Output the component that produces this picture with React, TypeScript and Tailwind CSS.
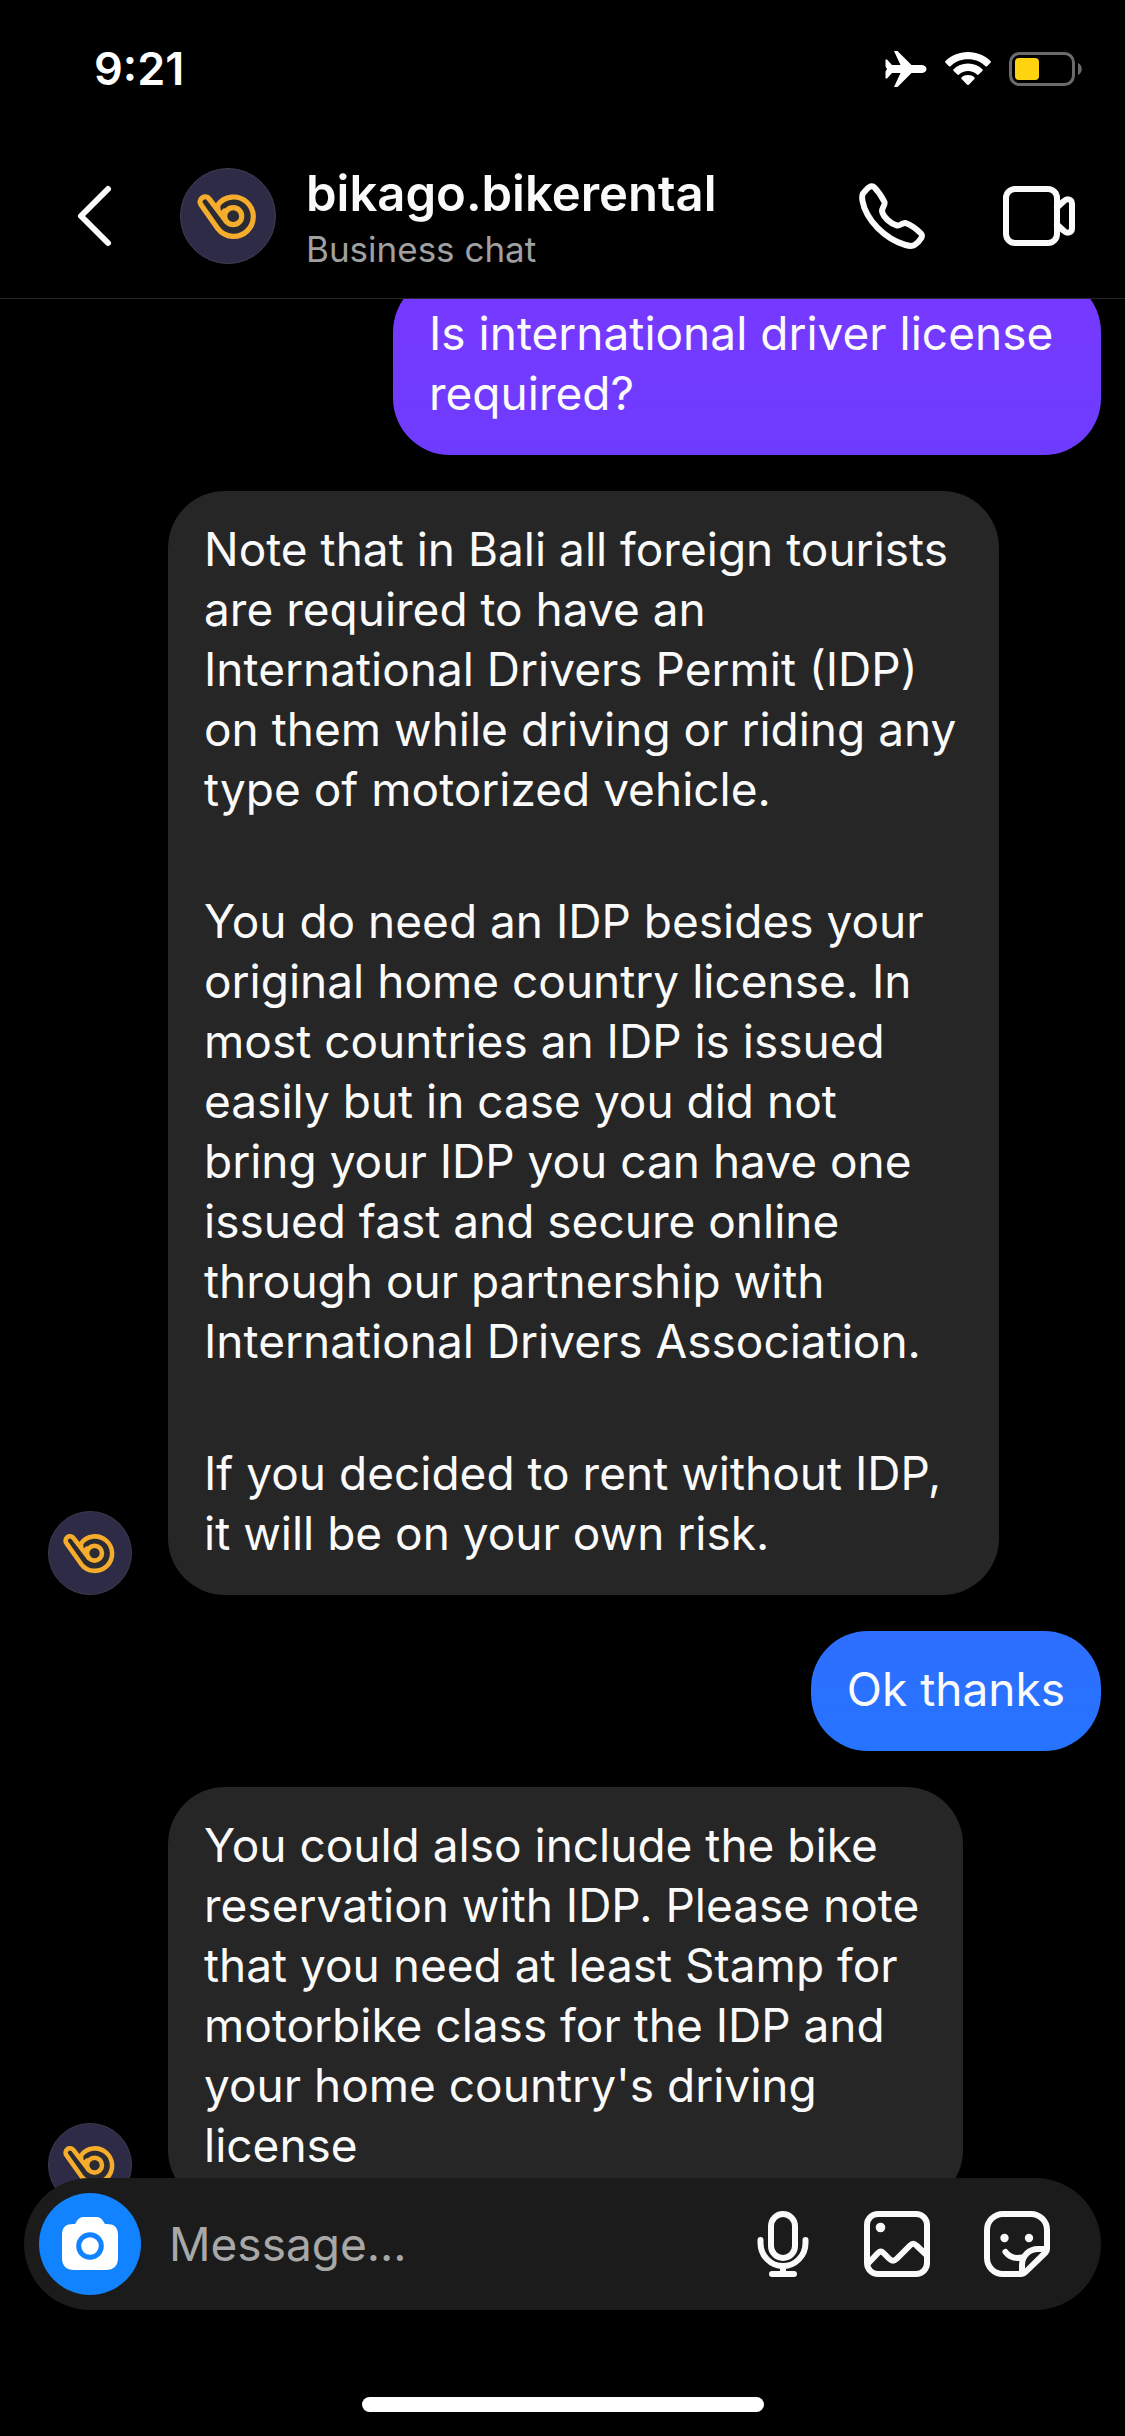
import { useState } from 'react';
import type { ReactNode } from 'react';

type Message = {
  id: number;
  from: 'me' | 'business';
  tone: string;
  width?: string;
  paragraphs: string[];
};

const messages: Message[] = [
  {
    id: 1,
    from: 'me',
    tone: 'bg-linear-to-b from-[#7738ff] to-[#6e3cff]',
    width: 'w-[708px]',
    paragraphs: ['Is international driver license\nrequired?'],
  },
  {
    id: 2,
    from: 'business',
    tone: 'bg-[#262626]',
    width: 'w-[831px]',
    paragraphs: [
      'Note that in Bali all foreign tourists\nare required to have an\nInternational Drivers Permit (IDP)\non them while driving or riding any\ntype of motorized vehicle.',
      'You do need an IDP besides your\noriginal home country license. In\nmost countries an IDP is issued\neasily but in case you did not\nbring your IDP you can have one\nissued fast and secure online\nthrough our partnership with\nInternational Drivers Association.',
      'If you decided to rent without IDP,\nit will be on your own risk.',
    ],
  },
  {
    id: 3,
    from: 'me',
    tone: 'bg-linear-to-b from-[#2e6eff] to-[#2574ff]',
    paragraphs: ['Ok thanks'],
  },
  {
    id: 4,
    from: 'business',
    tone: 'bg-[#262626]',
    width: 'w-[795px]',
    paragraphs: [
      "You could also include the bike\nreservation with IDP. Please note\nthat you need at least Stamp for\nmotorbike class for the IDP and\nyour home country's driving\nlicense",
    ],
  },
];

export default function App() {
  return (
    <div className="flex h-screen flex-col bg-black font-['Inter',sans-serif] text-[#fafafa]">
      <header className="shrink-0 border-b border-[#262626] pb-1">
        <StatusBar />
        <ChatHeader />
      </header>

      {/* Reversed so the thread stays pinned to the newest message */}
      <main className="flex min-h-0 flex-1 flex-col-reverse overflow-y-auto [scrollbar-width:none]">
        <div className="flex flex-col gap-9 pr-6 pl-12">
          {messages.map((message) => (
            <MessageRow key={message.id} message={message} />
          ))}
        </div>
      </main>

      <footer className="relative -mt-[29px] flex shrink-0 flex-col items-center px-6 pb-6">
        <Composer />
        <div className="mt-[87px] h-[15px] w-[402px] rounded-full bg-white" />
      </footer>
    </div>
  );
}

function StatusBar() {
  return (
    <div className="flex h-[138px] items-center justify-between pr-[43px] pl-[94px]">
      <span className="text-[45px] leading-[54px] font-semibold text-white">9:21</span>
      <div className="flex items-center gap-[18px]">
        <AirplaneIcon />
        <WifiIcon />
        <BatteryIcon />
      </div>
    </div>
  );
}

function ChatHeader() {
  return (
    <div className="flex h-[156px] items-center pr-[50px] pl-[72px]">
      <button type="button" aria-label="Back" className="mr-[63px]">
        <svg width="45" height="66" viewBox="0 0 45 66" fill="none" stroke="currentColor" strokeWidth="6" strokeLinecap="round" strokeLinejoin="round">
          <path d="M36 6 L9 33 L36 60" />
        </svg>
      </button>
      <Avatar className="size-24" />
      <div className="ml-[30px] flex-1 pt-3">
        <h1 className="text-[49px] leading-[54px] font-semibold">bikago.bikerental</h1>
        <p className="text-[35px] leading-[56px] text-[#a0a0a0]">Business chat</p>
      </div>
      <div className="flex items-center gap-[78px]">
        <button type="button" aria-label="Audio call">
          <PhoneIcon />
        </button>
        <button type="button" aria-label="Video call">
          <VideoIcon />
        </button>
      </div>
    </div>
  );
}

function MessageRow({ message }: { message: Message }) {
  const mine = message.from === 'me';

  return (
    <div className={`flex items-end ${mine ? 'justify-end' : 'gap-9'}`}>
      {!mine && <Avatar className="size-[84px]" />}
      <div
        className={`flex flex-col gap-[72px] rounded-[57px] px-9 pt-7 pb-8 text-[46px] leading-[60px] whitespace-pre-line ${message.tone} ${message.width ?? ''}`}
      >
        {message.paragraphs.map((text) => (
          <p key={text}>{text}</p>
        ))}
      </div>
    </div>
  );
}

function Composer() {
  const [draft, setDraft] = useState('');

  return (
    <form
      className="flex h-[132px] w-full items-center rounded-full bg-[#1b1b1b] pr-[51px] pl-[15px]"
      onSubmit={(e) => e.preventDefault()}
    >
      <button
        type="button"
        aria-label="Camera"
        className="flex size-[102px] shrink-0 items-center justify-center rounded-full bg-[#1283ff]"
      >
        <CameraIcon />
      </button>
      <input
        type="text"
        aria-label="Message"
        placeholder="Message..."
        value={draft}
        onChange={(e) => setDraft(e.target.value)}
        className="ml-7 min-w-0 flex-1 bg-transparent text-[46px] leading-[60px] outline-none placeholder:text-[#a8a8a8]"
      />
      <div className="flex items-center gap-[54px]">
        <button type="button" aria-label="Voice message">
          <MicIcon />
        </button>
        <button type="button" aria-label="Photo library">
          <PhotoIcon />
        </button>
        <button type="button" aria-label="Stickers">
          <StickerIcon />
        </button>
      </div>
    </form>
  );
}

function Avatar({ className }: { className: string }) {
  return (
    <svg className={`shrink-0 ${className}`} viewBox="0 0 96 96" fill="none" role="img" aria-label="bikago">
      <circle cx="48" cy="48" r="47.5" fill="#2d2b45" stroke="#403e50" />
      <path
        d="M46.5 53.6 L29 30.7 A5 5 0 0 0 21.2 37 L38.1 60.9 A19.7 19.7 0 1 0 37.6 37.2 L38 41 M44.5 43 L42 46.5"
        fill="#2b2b34"
        stroke="#f6ad2d"
        strokeWidth="5.2"
        strokeLinecap="round"
        strokeLinejoin="round"
      />
      <circle cx="53.2" cy="48.2" r="8.5" stroke="#f6ad2d" strokeWidth="5.2" />
    </svg>
  );
}

function LineIcon({ width, height = 66, children }: { width: number; height?: number; children: ReactNode }) {
  return (
    <svg
      width={width}
      height={height}
      viewBox={`0 0 ${width} ${height}`}
      fill="none"
      stroke="currentColor"
      strokeWidth="6"
      strokeLinecap="round"
      strokeLinejoin="round"
    >
      {children}
    </svg>
  );
}

function PhoneIcon() {
  return (
    <LineIcon width={66}>
      <path d="M10.5 4 C12 3 14 3 15 4 C19 8 23 14 25.5 19 C26.5 21.5 23 25 23 28 C24 34 32 41 38 42.5 C41.5 43 43 39.5 46.5 40 C52 42 57.5 46 62 50.5 C63.5 52 63 53.5 62.3 55 C60.5 58 58 60.5 55.5 62 C54 63 50 63 46.5 62 C26 56 7 37 3.5 18 C3 15 3 12 4 10.5 C6 8 8 5.5 10.5 4 Z" />
    </LineIcon>
  );
}

function VideoIcon() {
  return (
    <LineIcon width={72} height={60}>
      <rect x="3" y="3" width="51" height="54" rx="9" />
      <path d="M54 21.5 L61 15 C64 12 69 13 69 18 V42 C69 47 64 48 61 45 L54 38.5" />
    </LineIcon>
  );
}

function MicIcon() {
  return (
    <LineIcon width={54}>
      <rect x="15" y="3" width="24" height="44" rx="12" />
      <path d="M4.5 29 V32 A22.5 23 0 0 0 49.5 32 V29 M27 55 V63 M16 63 H38" />
    </LineIcon>
  );
}

function PhotoIcon() {
  return (
    <LineIcon width={66}>
      <rect x="3" y="3" width="60" height="60" rx="11" />
      <circle cx="16.5" cy="16.5" r="4.8" fill="currentColor" stroke="none" />
      <path d="M4 52.5 L14 42 C16 40 17.5 40 19.5 42 L25 47.5 C28 50.5 30 50.5 33 47.5 L46 34.5 C48.5 32 50 32 52.5 34.5 L62 43.5" />
    </LineIcon>
  );
}

function StickerIcon() {
  return (
    <LineIcon width={66}>
      <path d="M63 38 V19 A16 16 0 0 0 47 3 H19 A16 16 0 0 0 3 19 V47 A16 16 0 0 0 19 63 H37.5 C39 63 40 62.5 41 61.5 L61.5 41.5 C62.5 40.5 63 39.5 63 38 Z" />
      <path d="M38 62 V54 C38 45 45 38 54 38 H62" />
      <path d="M21.5 41 C26 47 31 48 38 46.5" />
      <circle cx="20.5" cy="27" r="4.2" fill="currentColor" stroke="none" />
      <circle cx="45" cy="27" r="4.2" fill="currentColor" stroke="none" />
    </LineIcon>
  );
}

function CameraIcon() {
  return (
    <svg width="56" height="54" viewBox="0 0 56 54" fill="none">
      <path
        d="M22 0 H34 C38 0 40.5 2 42 5.5 C42.5 6.5 43 7 44.5 7 C52 7 56 10 56 18 V41 C56 49 51.5 53 44 53 H12 C4.5 53 0 49 0 41 V18 C0 10 4 7 11.5 7 C13 7 13.5 6.5 14 5.5 C15.5 2 18 0 22 0 Z"
        fill="white"
      />
      <circle cx="28" cy="29" r="11.3" stroke="#1283ff" strokeWidth="5" />
    </svg>
  );
}

function AirplaneIcon() {
  return (
    <svg width="42" height="36" viewBox="0 0 42 36" fill="white">
      <path d="M9 0 H12.5 L26.5 14 H36 C39.5 14 41.5 16 41.5 18 C41.5 20 39.5 22 36 22 H26.5 L12.5 36 H9 L15.5 22 H7 L2 27.5 H0.5 V20.5 L2 18 L0.5 15.5 V8.5 H2 L7 14 H15.5 Z" />
    </svg>
  );
}

function WifiIcon() {
  return (
    <svg width="46" height="34" viewBox="0 0 46 34" fill="white">
      <path d="M23 0 C32 0 40 3.5 45.5 9 C46 9.5 46 10.2 45.5 10.7 L42 14.2 C41.5 14.7 41 14.7 40.5 14.2 C36 9.8 30 7.2 23 7.2 C16 7.2 10 9.8 5.5 14.2 C5 14.7 4.5 14.7 4 14.2 L0.5 10.7 C0 10.2 0 9.5 0.5 9 C6 3.5 14 0 23 0 Z" />
      <path d="M23 11.5 C28.7 11.5 33.7 13.7 37.4 17.2 C37.9 17.7 37.9 18.4 37.4 18.9 L33.6 22.6 C33.1 23.1 32.5 23.1 32 22.6 C29.6 20.4 26.5 19 23 19 C19.5 19 16.4 20.4 14 22.6 C13.5 23.1 12.9 23.1 12.4 22.6 L8.6 18.9 C8.1 18.4 8.1 17.7 8.6 17.2 C12.3 13.7 17.3 11.5 23 11.5 Z" />
      <path d="M23 23 C25.5 23 27.7 23.9 29.3 25.3 C29.9 25.8 29.9 26.5 29.4 27 L23.8 32.7 C23.3 33.2 22.7 33.2 22.2 32.7 L16.6 27 C16.1 26.5 16.1 25.8 16.7 25.3 C18.3 23.9 20.5 23 23 23 Z" />
    </svg>
  );
}

function BatteryIcon() {
  return (
    <svg width="73" height="34" viewBox="0 0 73 34" fill="none">
      <rect x="1.5" y="1.5" width="63" height="31" rx="9" stroke="#6b6b6b" strokeWidth="3" />
      <path d="M69 11 C74 13 74 21 69 23 Z" fill="#6b6b6b" />
      <rect x="6" y="6" width="24" height="22" rx="4" fill="#ffd30f" />
    </svg>
  );
}
